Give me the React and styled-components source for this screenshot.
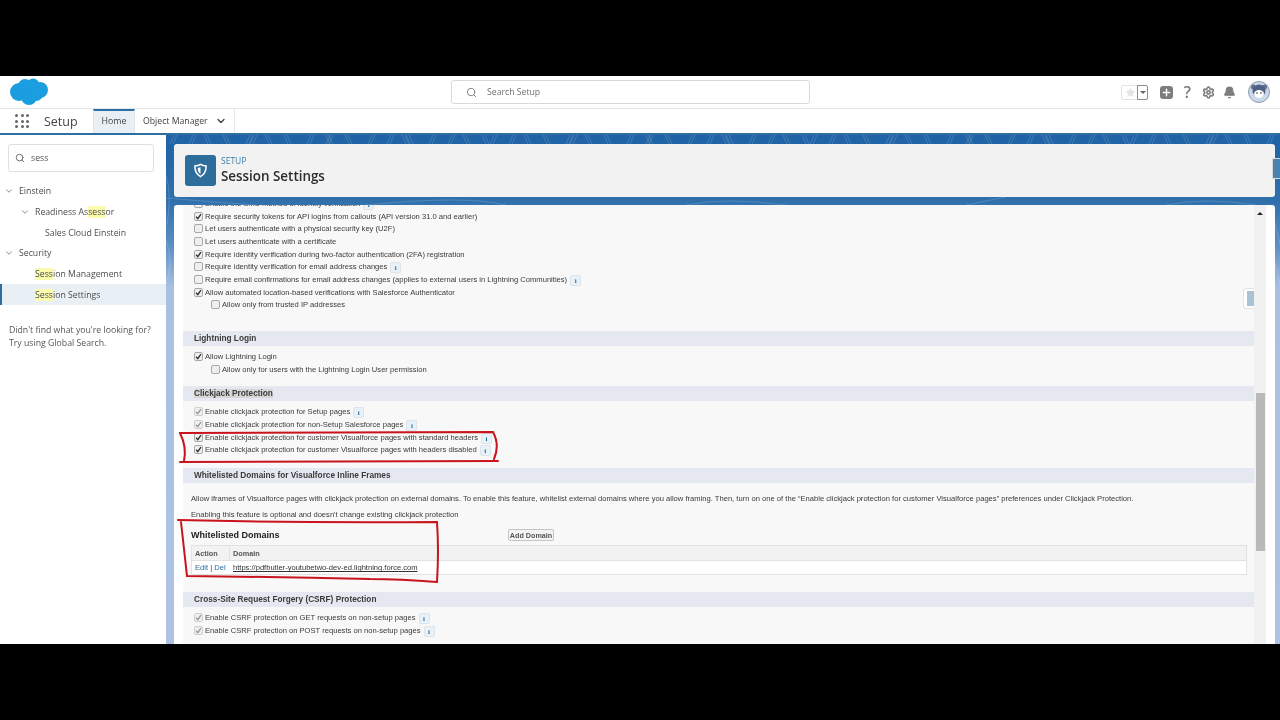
import styled, { createGlobalStyle } from 'styled-components'
import { Search, ChevronDown, Settings, Bell, Star, Plus } from 'lucide-react'

const GlobalStyle = createGlobalStyle`
    html, body { margin: 0; padding: 0; background: #000; overflow: hidden; }
    * { box-sizing: border-box; }
`

const SANS = `"Open Sans", "Noto Sans", sans-serif`
const ARIAL = `"Liberation Sans", Arial, sans-serif`

const Page = styled.div`
    position: relative;
    width: 1280px;
    height: 720px;
    padding: 76px 0;
    background: #000;
    font-family: ${SANS};
    overflow: hidden;
    filter: blur(0.35px);
`
const Shell = styled.div`
    height: 568px;
    display: flex;
    flex-direction: column;
    background: #fff;
`
const TopBar = styled.header`
    height: 33px;
    flex: none;
    position: relative;
    display: flex;
    align-items: center;
    justify-content: space-between;
    padding: 0 10px 0 9px;
    border-bottom: 1px solid #e4e4e4;
`
const SearchBox = styled.div`
    position: absolute;
    left: 451px;
    top: 4px;
    width: 359px;
    height: 24px;
    border: 1px solid #d8d8d8;
    border-radius: 3px;
    display: flex;
    align-items: center;
    gap: 10px;
    padding-left: 14px;
    color: #707070;
    font-size: 8.7px;
`
const Tools = styled.div`
    display: flex;
    align-items: center;
    color: #7d7d7d;
`
const FavButton = styled.div`
    width: 27px;
    height: 15px;
    display: flex;
    border: 1px solid #e3e3e3;
    border-radius: 2px;
    margin-right: 12px;
`
const FavStar = styled.div`
    width: 16px;
    display: flex;
    align-items: center;
    justify-content: center;
    color: #e4e4e4;
`
const FavArrow = styled.div`
    flex: 1;
    border: 1px solid #8c8c8c;
    border-radius: 0 2px 2px 0;
    margin: -1px;
    display: flex;
    align-items: center;
    justify-content: center;
    &::after {
        content: '';
        border-left: 3px solid transparent;
        border-right: 3px solid transparent;
        border-top: 3px solid #666;
    }
`
const PlusBox = styled.div`
    width: 13px;
    height: 13px;
    border-radius: 3px;
    background: #7d7d7d;
    color: #fff;
    display: flex;
    align-items: center;
    justify-content: center;
    margin-right: 4px;
`
const ToolSlot = styled.div`
    width: 21px;
    display: flex;
    justify-content: center;
`
const HelpMark = styled.span`
    font-size: 16px;
    line-height: 16px;
    font-weight: 600;
`
const AvatarGap = styled.div`
    width: 8px;
`
const NavBar = styled.nav`
    height: 26px;
    flex: none;
    display: flex;
    align-items: stretch;
    border-bottom: 2px solid #2d6fa3;
    color: #444;
`
const Waffle = styled.div`
    width: 14px;
    margin: 5px 15px 0 15px;
    height: 14px;
    display: grid;
    grid-template-columns: repeat(3, 3px);
    grid-template-rows: repeat(3, 3px);
    justify-content: space-between;
    align-content: space-between;
    & > i { background: #666; border-radius: 50%; }
`
const AppName = styled.div`
    width: 49px;
    font-size: 12.5px;
    line-height: 25px;
    color: #444;
`
const HomeTab = styled.div`
    width: 42px;
    background: #e9f0f5;
    border-top: 2px solid #2d6fa3;
    border-left: 1px solid #dfe5ea;
    border-right: 1px solid #dfe5ea;
    font-size: 8.8px;
    line-height: 21px;
    text-align: center;
`
const NavTab = styled.div`
    width: 100px;
    border-right: 1px solid #e8e8e8;
    display: flex;
    align-items: center;
    padding-left: 8px;
    gap: 7px;
    font-size: 8.7px;
    white-space: nowrap;
    color: #3e3e3c;
`
const Body = styled.div`
    flex: 1;
    min-height: 0;
    display: flex;
`
const Sidebar = styled.aside`
    width: 166px;
    flex: none;
    background: #fff;
    padding-top: 9px;
    color: #4a4a4a;
    font-size: 8.72px;
`
const QuickFind = styled.div`
    height: 28px;
    margin: 0 12px 9px 8px;
    border: 1px solid #e0e0e0;
    border-radius: 3px;
    display: flex;
    align-items: center;
    gap: 6px;
    padding-left: 6px;
    color: #555;
`
const TreeRow = styled.div`
    height: 20.7px;
    display: flex;
    align-items: center;
    padding-left: ${p => p.$indent}px;
    gap: 5px;
    white-space: nowrap;
    color: #4d4d4d;
    background: ${p => (p.$active ? '#e8eff5' : 'transparent')};
    box-shadow: ${p => (p.$active ? 'inset 2px 0 0 #2d6fa3' : 'none')};
`
const Hit = styled.span`
    background: #fbfbb0;
`
const Hint = styled.p`
    margin: 19px 0 0 9px;
    line-height: 13px;
    color: #555;
`
const Stage = styled.main`
    position: relative;
    flex: 1;
    min-width: 0;
    display: flex;
    flex-direction: column;
    padding: 9px 5px 0 8px;
    gap: 8px;
    background: linear-gradient(180deg, #1f63a6 0%, #2f70ac 13%, #5f90c4 22%, #a9c0e2 30%, #aec3e4 100%);
    overflow: hidden;
`
const Contours = styled.svg`
    position: absolute;
    left: 0;
    top: 0;
    pointer-events: none;
`
const TitleCard = styled.section`
    position: relative;
    height: 53px;
    flex: none;
    background: #f3f2f2;
    border-radius: 3px;
    display: flex;
    align-items: center;
    padding-left: 11px;
    gap: 5px;
`
const TitleIcon = styled.div`
    width: 31px;
    height: 31px;
    background: #2d6d9c;
    border-radius: 3px;
    display: flex;
    align-items: center;
    justify-content: center;
`
const TitleText = styled.div`
    display: flex;
    flex-direction: column;
    gap: 1px;
    padding-bottom: 1px;
`
const Eyebrow = styled.span`
    font-size: 8.5px;
    line-height: 11px;
    color: #3f7aa6;
`
const PageName = styled.h1`
    margin: 0;
    font-size: 13.4px;
    line-height: 18px;
    font-weight: 600;
    color: #2b2b2b;
`
const HelpTab = styled.div`
    position: absolute;
    right: -5px;
    top: 14px;
    width: 8px;
    height: 21px;
    background: #4a82b0;
    border: 1px solid #d8d8d8;
    border-right: 0;
    border-radius: 2px 0 0 2px;
`
const ContentCard = styled.section`
    position: relative;
    flex: 1;
    min-height: 0;
    display: flex;
    background: #fff;
    border-radius: 3px 3px 0 0;
    overflow: hidden;
`
const Form = styled.div`
    width: 1071px;
    margin-left: 9px;
    flex: none;
    background: #f8f8f8;
    font-family: ${ARIAL};
    font-size: 7.6px;
    color: #3a3a3a;
    overflow: hidden;
`
const FormInner = styled.div`
    margin-top: -8px;
`
const Row = styled.div`
    height: 12.68px;
    display: flex;
    align-items: center;
    padding-left: ${p => (p.$nested ? 28 : 11)}px;
    white-space: nowrap;
`
const RowGroup = styled.div`
    margin-top: ${p => p.$top || 0}px;
`
const Check = styled.span`
    width: 9px;
    height: 9px;
    flex: none;
    margin-right: 2px;
    border: 1px solid ${p => (p.$dim ? '#cfcfcf' : '#a8a8a8')};
    border-radius: 2px;
    background: #efefef;
    display: flex;
    align-items: center;
    justify-content: center;
    color: ${p => (p.$dim ? '#9a9a9a' : '#333')};
`
const Info = styled.span`
    width: 11px;
    height: 11px;
    margin: 2px 0 0 3px;
    flex: none;
    border: 1px solid #dde4ea;
    border-radius: 2px;
    background: #e9f1f8;
    color: #2d6d9c;
    font: bold 7px/10px "Liberation Serif", serif;
    text-align: center;
`
const Band = styled.div`
    height: 15px;
    margin-top: ${p => p.$top}px;
    background: #e6e8f1;
    padding-left: 11px;
    font-size: 8.25px;
    line-height: 15px;
    font-weight: bold;
    color: #3a3a3a;
`
const Selected = styled.span`
    background: #d6d6d6;
`
const Para = styled.p`
    margin: ${p => p.$top}px 0 0 8px;
    font-size: 7.6px;
    line-height: 12px;
    white-space: nowrap;
`
const ListHead = styled.div`
    display: flex;
    align-items: center;
    height: 14px;
    margin: 7px 0 0 8px;
`
const ListTitle = styled.h3`
    width: 317px;
    margin: 0;
    font-size: 9px;
    color: #222;
`
const AddButton = styled.button`
    width: 46px;
    height: 12px;
    padding: 0;
    border: 1px solid #c4c4c4;
    border-radius: 2px;
    background: #f4f4f4;
    font: bold 7.2px ${ARIAL};
    color: #555;
`
const ListTable = styled.div`
    width: 1056px;
    margin: 3px 0 0 8px;
    border: 1px solid #e2e2e2;
    background: #fff;
`
const ListRow = styled.div`
    height: ${p => (p.$head ? 15 : 13)}px;
    display: flex;
    align-items: center;
    background: ${p => (p.$head ? '#f2f2f2' : '#fff')};
    border-bottom: ${p => (p.$head ? '1px solid #e2e2e2' : 'none')};
    font-size: ${p => (p.$head ? '7.3px' : '7.57px')};
    font-weight: ${p => (p.$head ? 'bold' : 'normal')};
    color: ${p => (p.$head ? '#555' : '#333')};
`
const ActionCell = styled.div`
    width: 38px;
    padding-left: 3px;
    height: 100%;
    display: flex;
    align-items: center;
    border-right: ${p => (p.$head ? '1px solid #e2e2e2' : 'none')};
    white-space: nowrap;
`
const DomainCell = styled.div`
    padding-left: 3px;
    white-space: nowrap;
`
const ActionLink = styled.a`
    color: #2d6d9c;
`
const DomainLink = styled.a`
    color: #333;
    text-decoration: underline;
`
const ScrollTrack = styled.div`
    position: relative;
    width: 12px;
    flex: none;
    background: #f1f1f1;
`
const ScrollUp = styled.div`
    position: absolute;
    left: 3px;
    top: 7px;
    border-left: 3px solid transparent;
    border-right: 3px solid transparent;
    border-bottom: 3px solid #222;
`
const ScrollThumb = styled.div`
    position: absolute;
    left: 2px;
    top: 188px;
    width: 9px;
    height: 158px;
    background: #b9b9b9;
`
const DockTab = styled.div`
    position: absolute;
    left: 1069px;
    top: 83px;
    width: 11px;
    height: 21px;
    padding: 2px 0 2px 3px;
    background: #fff;
    border: 1px solid #e4e4e4;
    border-right: 0;
    border-radius: 3px 0 0 3px;
    &::after {
        content: '';
        display: block;
        height: 100%;
        background: #a9c3d4;
    }
`
const Marks = styled.svg`
    position: absolute;
    left: 0;
    top: 0;
    pointer-events: none;
`

// short slanted strokes of the blue header pattern, in bunches along the top strip
const HATCH = Array.from({ length: 70 }, (_, i) => {
    const x = 4 + i * 16 + (i % 5) * 3
    const lean = i % 4 < 2 ? 4 : -4
    return `M${x} 9 L${x + lean} 0 M${x + 3} 9 L${x + 3 + lean} 0`
}).join(' ')

function CheckRow({ nested, dim, checked, info, children }) {
    return (
        <Row $nested={nested}>
            <Check $dim={dim}>
                {checked && (
                    <svg width="7" height="7" viewBox="0 0 10 10">
                        <path d="M1.5 5.5 L4 8 L8.5 1.5" fill="none" stroke="currentColor" strokeWidth="2" />
                    </svg>
                )}
            </Check>
            {children}
            {info && <Info>i</Info>}
        </Row>
    )
}

function CloudLogo() {
    return (
        <svg width="40" height="30" viewBox="0 0 40 30">
            <g fill="#1b9ee0">
                <circle cx="10" cy="15" r="9" />
                <circle cx="16" cy="9" r="7" />
                <circle cx="24" cy="8" r="6.5" />
                <circle cx="31" cy="13" r="8" />
                <circle cx="20" cy="20" r="8" />
                <circle cx="27" cy="17" r="7" />
            </g>
        </svg>
    )
}

function Avatar() {
    return (
        <svg width="22" height="22" viewBox="0 0 22 22">
            <circle cx="11" cy="11" r="10.5" fill="#cdd8e8" stroke="#8e9ab0" />
            <circle cx="5.5" cy="6" r="2.5" fill="#5d6f8e" />
            <circle cx="16.5" cy="6" r="2.5" fill="#5d6f8e" />
            <circle cx="11" cy="10" r="6.5" fill="#4f6285" />
            <ellipse cx="11" cy="13" rx="5" ry="4" fill="#fff" />
            <circle cx="9" cy="12" r="0.8" fill="#333" />
            <circle cx="13" cy="12" r="0.8" fill="#333" />
        </svg>
    )
}

const SECURITY_ROWS = [
    { label: 'Enable the SMS method of identity verification', info: true },
    { label: 'Require security tokens for API logins from callouts (API version 31.0 and earlier)', checked: true },
    { label: 'Let users authenticate with a physical security key (U2F)' },
    { label: 'Let users authenticate with a certificate' },
    { label: 'Require identity verification during two-factor authentication (2FA) registration', checked: true },
    { label: 'Require identity verification for email address changes', info: true },
    { label: 'Require email confirmations for email address changes (applies to external users in Lightning Communities)', info: true },
    { label: 'Allow automated location-based verifications with Salesforce Authenticator', checked: true },
    { label: 'Allow only from trusted IP addresses', nested: true },
]

const CLICKJACK_ROWS = [
    { label: 'Enable clickjack protection for Setup pages', checked: true, dim: true, info: true },
    { label: 'Enable clickjack protection for non-Setup Salesforce pages', checked: true, dim: true, info: true },
    { label: 'Enable clickjack protection for customer Visualforce pages with standard headers', checked: true, info: true },
    { label: 'Enable clickjack protection for customer Visualforce pages with headers disabled', checked: true, info: true },
]

const renderRows = rows => rows.map(r => (
    <CheckRow key={r.label} nested={r.nested} dim={r.dim} checked={r.checked} info={r.info}>{r.label}</CheckRow>
))

export default function App() {
    return (
        <Page>
            <GlobalStyle />
            <Shell>
                <TopBar>
                    <CloudLogo />
                    <SearchBox>
                        <Search size={11} color="#777" />
                        Search Setup
                    </SearchBox>
                    <Tools>
                        <FavButton>
                            <FavStar><Star size={11} fill="currentColor" strokeWidth={0} /></FavStar>
                            <FavArrow />
                        </FavButton>
                        <PlusBox><Plus size={11} strokeWidth={3} /></PlusBox>
                        <ToolSlot><HelpMark>?</HelpMark></ToolSlot>
                        <ToolSlot><Settings size={13} strokeWidth={3} /></ToolSlot>
                        <ToolSlot><Bell size={13} fill="currentColor" /></ToolSlot>
                        <AvatarGap />
                        <Avatar />
                    </Tools>
                </TopBar>
                <NavBar>
                    <Waffle>{Array.from({ length: 9 }, (_, i) => <i key={i} />)}</Waffle>
                    <AppName>Setup</AppName>
                    <HomeTab>Home</HomeTab>
                    <NavTab>Object Manager <ChevronDown size={12} strokeWidth={2.5} /></NavTab>
                </NavBar>
                <Body>
                    <Sidebar>
                        <QuickFind><Search size={10} color="#555" /> sess</QuickFind>
                        <TreeRow $indent={4}><ChevronDown size={10} color="#777" />Einstein</TreeRow>
                        <TreeRow $indent={20}><ChevronDown size={10} color="#777" /><span>Readiness As<Hit>sess</Hit>or</span></TreeRow>
                        <TreeRow $indent={45}>Sales Cloud Einstein</TreeRow>
                        <TreeRow $indent={4}><ChevronDown size={10} color="#777" />Security</TreeRow>
                        <TreeRow $indent={35}><span><Hit>Sess</Hit>ion Management</span></TreeRow>
                        <TreeRow $indent={35} $active><span><Hit>Sess</Hit>ion Settings</span></TreeRow>
                        <Hint>Didn't find what you're looking for?<br />Try using Global Search.</Hint>
                    </Sidebar>
                    <Stage>
                        <Contours width="1114" height="510" viewBox="0 0 1114 510">
                            <g fill="none" stroke="#ffffff" strokeOpacity="0.16">
                                <path d={HATCH} />
                                <path d="M0 63 Q60 68 90 70 M200 70 Q300 60 340 70 M520 70 Q560 62 620 70 M800 70 L840 62 M1000 70 Q1040 62 1090 70" />
                                <path d="M0 40 Q6 60 1 90 M0 105 Q8 125 0 150" />
                                <path d="M1107 20 L1114 40 M1107 80 L1114 110 M1107 120 L1114 150" />
                            </g>
                        </Contours>
                        <TitleCard>
                            <TitleIcon>
                                <svg width="15" height="15" viewBox="0 0 16 16">
                                    <path d="M8 1.5 C10 3 12 3.2 14 3.2 C14 9 12 12.5 8 14.5 C4 12.5 2 9 2 3.2 C4 3.2 6 3 8 1.5 Z" fill="none" stroke="#fff" strokeWidth="1.6" />
                                    <path d="M8 4.5 C6.5 5 5 5.3 5 5.3 C5 8.5 6 10.5 8 11.8 Z" fill="#fff" />
                                </svg>
                            </TitleIcon>
                            <TitleText>
                                <Eyebrow>SETUP</Eyebrow>
                                <PageName>Session Settings</PageName>
                            </TitleText>
                            <HelpTab />
                        </TitleCard>
                        <ContentCard>
                            <Form>
                                <FormInner>
                                    {renderRows(SECURITY_ROWS)}
                                    <Band $top={20}>Lightning Login</Band>
                                    <RowGroup $top={4}>
                                        <CheckRow checked>Allow Lightning Login</CheckRow>
                                        <CheckRow nested>Allow only for users with the Lightning Login User permission</CheckRow>
                                    </RowGroup>
                                    <Band $top={11}><Selected>Clickjack Protection</Selected></Band>
                                    <RowGroup $top={4}>{renderRows(CLICKJACK_ROWS)}</RowGroup>
                                    <Band $top={12}>Whitelisted Domains for Visualforce Inline Frames</Band>
                                    <Para $top={10}>Allow iframes of Visualforce pages with clickjack protection on external domains. To enable this feature, whitelist external domains where you allow framing. Then, turn on one of the “Enable clickjack protection for customer Visualforce pages” preferences under Clickjack Protection.</Para>
                                    <Para $top={4}>Enabling this feature is optional and doesn't change existing clickjack protection</Para>
                                    <ListHead>
                                        <ListTitle>Whitelisted Domains</ListTitle>
                                        <AddButton>Add Domain</AddButton>
                                    </ListHead>
                                    <ListTable>
                                        <ListRow $head>
                                            <ActionCell $head>Action</ActionCell>
                                            <DomainCell $head>Domain</DomainCell>
                                        </ListRow>
                                        <ListRow>
                                            <ActionCell><ActionLink>Edit</ActionLink>&nbsp;|&nbsp;<ActionLink>Del</ActionLink></ActionCell>
                                            <DomainCell><DomainLink>https://pdfbutler-youtubetwo-dev-ed.lightning.force.com</DomainLink></DomainCell>
                                        </ListRow>
                                    </ListTable>
                                    <Band $top={17}>Cross-Site Request Forgery (CSRF) Protection</Band>
                                    <RowGroup $top={4}>
                                        <CheckRow checked dim info>Enable CSRF protection on GET requests on non-setup pages</CheckRow>
                                        <CheckRow checked dim info>Enable CSRF protection on POST requests on non-setup pages</CheckRow>
                                    </RowGroup>
                                </FormInner>
                            </Form>
                            <ScrollTrack>
                                <ScrollUp />
                                <ScrollThumb />
                            </ScrollTrack>
                            <DockTab />
                        </ContentCard>
                    </Stage>
                </Body>
            </Shell>
            <Marks width="1280" height="720" viewBox="0 0 1280 720">
                <g fill="none" stroke="#c8141c" strokeWidth="2" strokeLinecap="round">
                    <path d="M180 433 Q340 433 493 432 Q500 445 494 459" />
                    <path d="M180 462 Q340 462 498 461" />
                    <path d="M180 433 Q187 447 184 461" />
                    <path d="M178 520 Q300 523 437 522 Q439 550 437 582 Q400 579 370 579 Q280 577 187 576 Q184 550 181 522" />
                </g>
            </Marks>
        </Page>
    )
}
